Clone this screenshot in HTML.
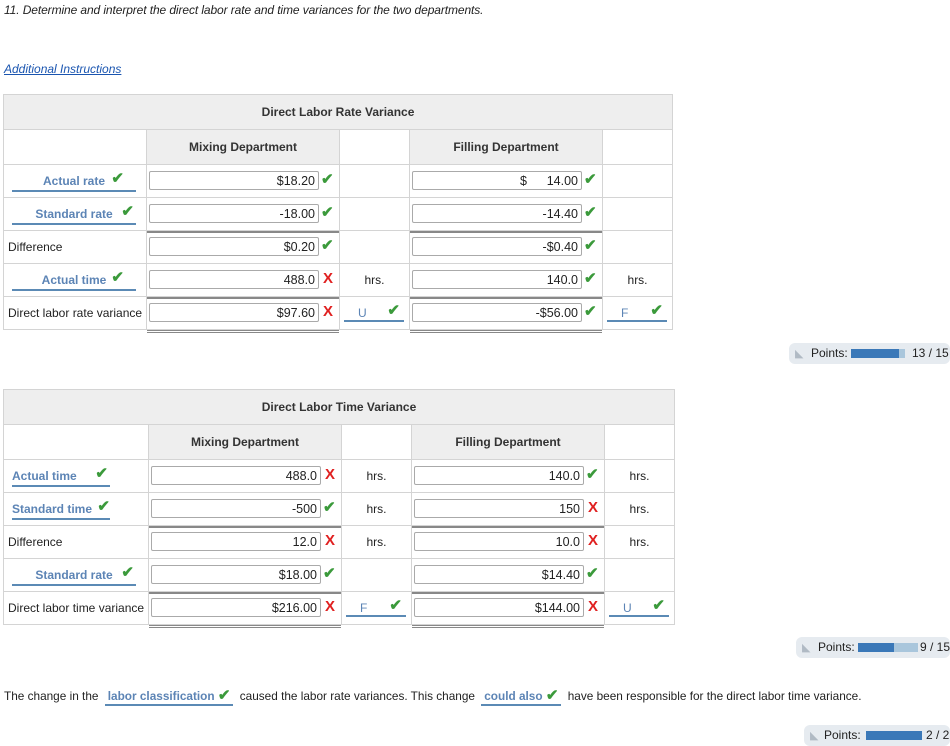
<!DOCTYPE html>
<html><head><meta charset="utf-8"><style>
body{margin:0;background:#fff;font-family:"Liberation Sans",Arial,sans-serif;font-size:12px;color:#222;width:950px;height:746px;position:relative;overflow:hidden}
.a{position:absolute}
table{position:absolute;border-collapse:collapse;table-layout:fixed}
td{border:1px solid #d4d4d4;padding:0;position:relative;height:32px;vertical-align:middle;box-sizing:border-box}
tr{height:33px}
.hd{height:35px}
.hd td{background:#eee;font-weight:bold;text-align:center;color:#333;height:35px}
.lbl{padding-left:4px}
.in{position:absolute;left:2px;top:6px;width:170px;height:19px;border:1px solid #aaa;background:#fff;text-align:right;line-height:18px;box-sizing:border-box;padding-right:3px;font-size:12.5px;border-radius:2px}
.ck{position:absolute;left:174px;top:5px;color:#3b9a3b;font-size:15px;font-weight:bold;line-height:19px}
.x{position:absolute;left:176px;top:5px;color:#e02020;font-size:15px;font-weight:bold;line-height:19px}
.thk{box-shadow:inset 0 2px 0 #888}
.dbl::after{content:"";position:absolute;left:0;right:0;bottom:-4px;height:3px;border-top:1px solid #888;border-bottom:1px solid #888;box-sizing:border-box}
.dd{position:absolute;top:7px;height:18px;border-bottom:2px solid #5b8ab5;color:#5c84b5;font-weight:bold;text-align:center;line-height:18px}
.dd b{color:#3b9a3b;font-size:15px;position:absolute;right:12px;top:-2px}
.u{text-align:center}
.pts{position:absolute;height:21px;background:#e6ebf0;border-radius:6px;font-size:12px;line-height:21px;white-space:nowrap}
.ic{position:absolute;left:6px;top:6px;width:10px;height:10px;color:#b0bac4;font-size:11px;line-height:10px}
</style></head><body>
<div class="a" style="left:4px;top:3px;font-style:italic;font-size:12px;letter-spacing:-0.1px">11. Determine and interpret the direct labor rate and time variances for the two departments.</div>
<div class="a" style="left:4px;top:62px;font-style:italic;color:#1a55b0;text-decoration:underline">Additional Instructions</div>

<table style="left:3px;top:94px;width:669px">
<colgroup><col style="width:143px"><col style="width:193px"><col style="width:70px"><col style="width:193px"><col style="width:70px"></colgroup>
<tr class="hd"><td colspan="5">Direct Labor Rate Variance</td></tr>
<tr class="hd"><td style="background:#fff"></td><td>Mixing Department</td><td style="background:#fff"></td><td>Filling Department</td><td style="background:#fff"></td></tr>
<tr><td><div class="dd" style="left:8px;width:124px">Actual rate<b>✔</b></div></td><td><div class="in">$18.20</div><span class="ck">✔</span></td><td></td><td><div class="in"><span style="position:absolute;left:107px">$</span>14.00</div><span class="ck">✔</span></td><td></td></tr>
<tr><td><div class="dd" style="left:8px;width:124px">Standard rate<b style="right:2px">✔</b></div></td><td><div class="in">-18.00</div><span class="ck">✔</span></td><td></td><td><div class="in">-14.40</div><span class="ck">✔</span></td><td></td></tr>
<tr><td class="lbl">Difference</td><td class="thk"><div class="in">$0.20</div><span class="ck">✔</span></td><td></td><td class="thk"><div class="in">-$0.40</div><span class="ck">✔</span></td><td></td></tr>
<tr><td><div class="dd" style="left:8px;width:124px">Actual time<b>✔</b></div></td><td><div class="in">488.0</div><span class="x">X</span></td><td class="u">hrs.</td><td><div class="in">140.0</div><span class="ck">✔</span></td><td class="u">hrs.</td></tr>
<tr><td class="lbl">Direct labor rate variance</td><td class="thk dbl"><div class="in">$97.60</div><span class="x">X</span></td><td><div class="dd" style="left:4px;width:60px;text-align:left;padding-left:14px;box-sizing:border-box;font-weight:normal">U<b style="right:4px">✔</b></div></td><td class="thk dbl"><div class="in">-$56.00</div><span class="ck">✔</span></td><td><div class="dd" style="left:4px;width:60px;text-align:left;padding-left:14px;box-sizing:border-box;font-weight:normal">F<b style="right:4px">✔</b></div></td></tr>
</table>

<div class="pts" style="left:789px;top:343px;width:161px"><span class="ic">◣</span><span class="a" style="left:22px">Points:</span><div class="a" style="left:62px;top:6px;width:54px;height:9px;background:#a9c6dc"></div><div class="a" style="left:62px;top:6px;width:48px;height:9px;background:#3a78b8"></div><span class="a" style="left:123px">13 / 15</span></div>

<table style="left:3px;top:389px;width:671px">
<colgroup><col style="width:145px"><col style="width:193px"><col style="width:70px"><col style="width:193px"><col style="width:70px"></colgroup>
<tr class="hd"><td colspan="5">Direct Labor Time Variance</td></tr>
<tr class="hd"><td style="background:#fff"></td><td>Mixing Department</td><td style="background:#fff"></td><td>Filling Department</td><td style="background:#fff"></td></tr>
<tr><td><div class="dd" style="left:8px;width:98px;text-align:left">Actual time<b style="right:2px">✔</b></div></td><td><div class="in">488.0</div><span class="x">X</span></td><td class="u">hrs.</td><td><div class="in">140.0</div><span class="ck">✔</span></td><td class="u">hrs.</td></tr>
<tr><td><div class="dd" style="left:8px;width:98px;text-align:left">Standard time<b style="right:0">✔</b></div></td><td><div class="in">-500</div><span class="ck">✔</span></td><td class="u">hrs.</td><td><div class="in">150</div><span class="x">X</span></td><td class="u">hrs.</td></tr>
<tr><td class="lbl">Difference</td><td class="thk"><div class="in">12.0</div><span class="x">X</span></td><td class="u">hrs.</td><td class="thk"><div class="in">10.0</div><span class="x">X</span></td><td class="u">hrs.</td></tr>
<tr><td><div class="dd" style="left:8px;width:124px">Standard rate<b style="right:2px">✔</b></div></td><td><div class="in">$18.00</div><span class="ck">✔</span></td><td></td><td><div class="in">$14.40</div><span class="ck">✔</span></td><td></td></tr>
<tr><td class="lbl">Direct labor time variance</td><td class="thk dbl"><div class="in">$216.00</div><span class="x">X</span></td><td><div class="dd" style="left:4px;width:60px;text-align:left;padding-left:14px;box-sizing:border-box;font-weight:normal">F<b style="right:4px">✔</b></div></td><td class="thk dbl"><div class="in">$144.00</div><span class="x">X</span></td><td><div class="dd" style="left:4px;width:60px;text-align:left;padding-left:14px;box-sizing:border-box;font-weight:normal">U<b style="right:4px">✔</b></div></td></tr>
</table>

<div class="pts" style="left:796px;top:637px;width:154px"><span class="ic">◣</span><span class="a" style="left:22px">Points:</span><div class="a" style="left:62px;top:6px;width:60px;height:9px;background:#a9c6dc"></div><div class="a" style="left:62px;top:6px;width:36px;height:9px;background:#3a78b8"></div><span class="a" style="left:124px">9 / 15</span></div>

<div class="a" style="left:4px;top:686px;white-space:nowrap;font-size:11.8px">The change in the <span style="display:inline-block;border-bottom:2px solid #5b8ab5;color:#5c84b5;font-weight:bold;padding:0 3px;margin:0 3px">labor classification <b style="color:#3b9a3b;font-size:15px">✔</b></span> caused the labor rate variances. This change <span style="display:inline-block;border-bottom:2px solid #5b8ab5;color:#5c84b5;font-weight:bold;padding:0 3px;margin:0 3px">could also <b style="color:#3b9a3b;font-size:15px">✔</b></span> have been responsible for the direct labor time variance.</div>

<div class="pts" style="left:804px;top:725px;width:146px"><span class="ic">◣</span><span class="a" style="left:20px">Points:</span><div class="a" style="left:62px;top:6px;width:56px;height:9px;background:#3a78b8"></div><span class="a" style="left:122px">2 / 2</span></div>
</body></html>
